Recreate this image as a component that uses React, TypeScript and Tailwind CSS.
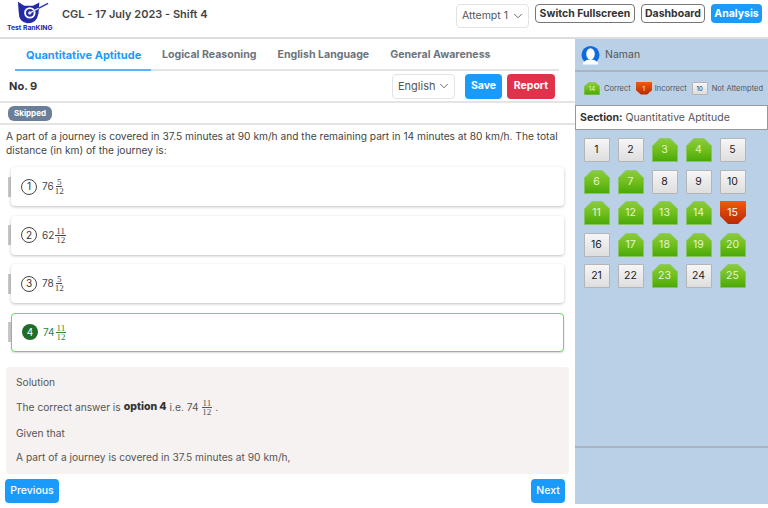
import { ChevronDown } from "lucide-react"

const font = { fontFamily: '"Inter", "Liberation Sans", sans-serif' }

const tabs = ["Quantitative Aptitude", "Logical Reasoning", "English Language", "General Awareness"]

// c = correct, i = incorrect, n = not attempted
const palette = "nnccn" + "ccnnn" + "ccccinccccnncnc"

function Frac({ top, bottom }: { top: string; bottom: string }) {
  return (
    <span className="inline-flex flex-col items-center align-middle font-['Liberation_Serif',serif] text-[9px] leading-[8px]">
      <span className="border-b border-current px-px">{top}</span>
      <span>{bottom}</span>
    </span>
  )
}

function Badge({ kind, label, size = "big" }: { kind: string; label: string; size?: "big" | "small" }) {
  const small = size === "small"
  const box = small ? "w-4 h-[13px] text-[6px]" : "w-[26px] h-[24px] text-[10.5px]"
  if (kind === "n") {
    return (
      <div className={`${box} flex items-center justify-center border border-[#b5b5b5] bg-gradient-to-b from-[#f6f6f6] to-[#dedede] text-[#222] rounded-[1px]`}>
        {label}
      </div>
    )
  }
  const correct = kind === "c"
  return (
    <div className={`${box} relative flex items-center justify-center ${correct ? "text-[#e4f5cf]" : "text-white"}`}>
      <svg viewBox="0 0 26 24" preserveAspectRatio="none" className="absolute inset-0 w-full h-full">
        <defs>
          <linearGradient id="gc" x1="0" y1="0" x2="0" y2="1">
            <stop offset="0" stopColor="#8ccb3e" />
            <stop offset="0.5" stopColor="#70bf1c" />
            <stop offset="1" stopColor="#48a808" />
          </linearGradient>
          <linearGradient id="gi" x1="0" y1="0" x2="0" y2="1">
            <stop offset="0" stopColor="#f25a10" />
            <stop offset="1" stopColor="#b82a02" />
          </linearGradient>
        </defs>
        {correct ? (
          <polygon points="0.4,8 8,0.4 18,0.4 25.6,8 25.6,23.6 0.4,23.6" fill="url(#gc)" stroke="#86c85a" strokeWidth="0.8" />
        ) : (
          <polygon points="0,0 26,0 26,15 18,23 8,23 0,15" fill="url(#gi)" />
        )}
      </svg>
      <span className="relative">{label}</span>
    </div>
  )
}

function Option({ n, whole, top, bottom, right }: { n: number; whole: string; top: string; bottom: string; right?: boolean }) {
  return (
    <div className="flex items-center pl-2 pr-[4px]">
      <div className="w-[3px] h-[20px] bg-[#c8c8c8]" />
      <div
        className={`flex-1 h-[39px] rounded-[4px] flex items-center pl-[10px] gap-[5px] bg-white ${
          right ? "border border-[#5fdc66] shadow-[0_1px_2px_rgba(0,0,0,0.15)] text-[#2a8a34]" : "shadow-[0_1px_3px_rgba(0,0,0,0.25)] text-[#444]"
        }`}
      >
        <div
          className={`w-[16px] h-[16px] rounded-full flex items-center justify-center text-[10px] ${
            right ? "bg-[#1f6e27] text-white" : "border border-[#444] text-[#333]"
          }`}
        >
          {n}
        </div>
        <span className="text-[10px] flex items-center gap-px">
          {whole}
          <Frac top={top} bottom={bottom} />
        </span>
      </div>
    </div>
  )
}

export default function App() {
  return (
    <div style={font} className="w-[768px] h-[508px] bg-white overflow-hidden text-[#444]">
      {/* Header */}
      <div className="h-[39px] border-b-2 border-[#ddd] flex items-start">
        <div className="w-[46px] h-[32px] ml-[7px] flex flex-col items-start">
          <svg viewBox="0 0 40 29" className="w-[32px] h-[23px] ml-[10px] mt-px">
            <path d="M1 1 L9 6 L20 6 L28 2 L27 15 Q25 28 13 28 Q2 27 2 14 Z" fill="#2329a8" />
            <circle cx="16" cy="15" r="6" fill="none" stroke="#fff" strokeWidth="2.4" />
            <circle cx="16" cy="15" r="2" fill="#fff" />
            <path d="M16 15 L39 3" stroke="#2b3bb0" strokeWidth="2" />
            <path d="M16 15 L27 9" stroke="#fff" strokeWidth="1.4" />
          </svg>
          <span className="text-[6.8px] font-bold text-[#2329a8] whitespace-nowrap leading-[7px]">Test RanKING</span>
        </div>
        <div className="ml-[9px] mt-[6px] text-[11px] font-semibold text-[#444]">CGL - 17 July 2023 - Shift 4</div>
        <div className="ml-auto flex items-start gap-[6px] mr-[6px] mt-[4px]">
          <div className="h-[24px] w-[73px] border border-[#e3e3e3] rounded-[4px] flex items-center justify-between pl-[5px] pr-[3px] text-[10.5px] text-[#555] whitespace-nowrap">
            Attempt 1 <ChevronDown size={14} strokeWidth={1.5} />
          </div>
          <button className="h-[19px] w-[100px] border border-[#777] rounded-[4px] text-[10.5px] font-bold text-[#333] whitespace-nowrap">Switch Fullscreen</button>
          <button className="h-[19px] w-[64px] border border-[#777] rounded-[4px] text-[10.5px] font-bold text-[#333]">Dashboard</button>
          <button className="h-[19px] w-[51px] bg-[#1a9bfc] rounded-[4px] text-[10.5px] font-bold text-white">Analysis</button>
        </div>
      </div>

      <div className="flex h-[465px]">
        {/* Left column */}
        <div className="w-[575px] flex flex-col">
          <div className="h-[32px] ml-[15px] mr-[16px] border-b-2 border-[#e4e4e4] flex text-[10.6px] font-bold text-[#6c757d]">
            <div className="px-[11px] pt-[8px] h-[32px] w-[136px] whitespace-nowrap border-b-2 border-[#5db2fb] text-[#1a9bfc] text-[11px]">{tabs[0]}</div>
            <div className="ml-[11px] pt-[8px]">{tabs[1]}</div>
            <div className="ml-[21px] pt-[8px]">{tabs[2]}</div>
            <div className="ml-[21px] pt-[8px]">{tabs[3]}</div>
          </div>

          <div className="h-[32px] border-b-2 border-[#e4e4e4] flex items-center pl-[9px] pr-[20px]">
            <span className="text-[11px] font-bold text-[#333]">No. 9</span>
            <div className="ml-auto flex items-center">
              <div className="h-[25px] w-[63px] border border-[#e3e3e3] rounded-[4px] flex items-center justify-between pl-[5px] pr-[3px] text-[11px] text-[#555]">
                English <ChevronDown size={14} strokeWidth={1.5} />
              </div>
              <button className="ml-[10px] w-[37px] h-[25px] bg-[#1a9bfc] rounded-[4px] text-[10.5px] font-bold text-white">Save</button>
              <button className="ml-[5px] w-[48px] h-[25px] bg-[#e0324a] rounded-[4px] text-[10.5px] font-bold text-white">Report</button>
            </div>
          </div>

          <div className="h-[22px] border-b-2 border-[#e4e4e4] pl-[8px] pt-[3px]">
            <span className="block w-[44px] h-[15px] leading-[15px] text-center rounded-[6px] bg-[#6c7f99] text-white text-[8px] font-bold">Skipped</span>
          </div>

          <p className="mt-[4px] mb-px mx-[6px] text-[10.2px] leading-[14px] text-[#444]">
            A part of a journey is covered in 37.5 minutes at 90 km/h and the remaining part in 14 minutes at 80 km/h. The total distance (in km) of the journey is:
          </p>

          <div className="mt-[9px] flex flex-col gap-[9.5px] pr-[7px]">
            <Option n={1} whole="76" top="5" bottom="12" />
            <Option n={2} whole="62" top="11" bottom="12" />
            <Option n={3} whole="78" top="5" bottom="12" />
            <Option n={4} whole="74" top="11" bottom="12" right />
          </div>

          <div className="mt-[15px] mx-[6px] h-[107px] bg-[#f5f2f1] rounded-[4px] pl-[10px] pt-[8px] text-[10.2px] text-[#555] flex flex-col gap-[10px] leading-[14px]">
            <div>Solution</div>
            <div className="flex items-center gap-[3px]">
              <span>The correct answer is</span> <b className="font-extrabold text-[10.5px] text-[#333]">option 4</b> <span>i.e. 74</span>
              <Frac top="11" bottom="12" />.
            </div>
            <div>Given that</div>
            <div>A part of a journey is covered in 37.5 minutes at 90 km/h,</div>
          </div>

          <div className="mt-[5px] flex justify-between pl-[5px] pr-[10px]">
            <button className="w-[54px] h-[24px] bg-[#1a9bfc] rounded-[4px] text-[10.5px] font-medium text-white">Previous</button>
            <button className="w-[34px] h-[24px] bg-[#1a9bfc] rounded-[4px] text-[10.5px] font-medium text-white">Next</button>
          </div>
        </div>

        {/* Right column */}
        <div className="w-[193px] h-[465px] bg-[#b9d0e7] flex flex-col">
          <div className="h-[33px] border-b-2 border-[#a9b4c0] flex items-center pl-[6px] gap-[5px]">
            <svg viewBox="0 0 20 20" className="w-[19px] h-[20px]">
              <circle cx="10" cy="10" r="9.5" fill="#0d6be0" />
              <ellipse cx="10" cy="9" rx="4.5" ry="6" fill="#fff" />
              <path d="M2 18 Q10 11 18 18 L18 20 L2 20 Z" fill="#fff" />
            </svg>
            <span className="text-[10.5px] text-[#555]">Naman</span>
          </div>
          <div className="h-[33px] flex items-center pl-[9px] text-[7.5px] text-[#555] whitespace-nowrap">
            <Badge kind="c" label="14" size="small" />
            <span className="ml-[4px]">Correct</span>
            <div className="ml-[5px]"><Badge kind="i" label="1" size="small" /></div>
            <span className="ml-[3px]">Incorrect</span>
            <div className="ml-[5px]"><Badge kind="n" label="10" size="small" /></div>
            <span className="ml-[4px]">Not Attempted</span>
          </div>
          <div className="h-[25px] bg-white border border-[#999] flex items-center pl-[4px] text-[10.5px] text-[#555]">
            <b className="font-bold text-[#333] mr-[3px]">Section:</b> Quantitative Aptitude
          </div>
          <div className="mt-[8px] pl-[8.5px] grid grid-cols-[repeat(5,26px)] gap-x-[8px] gap-y-[7.5px]">
            {palette.split("").map((k, i) => (
              <Badge key={i} kind={k} label={String(i + 1)} />
            ))}
          </div>
          <div className="mt-auto h-[58px] border-t-2 border-[#a9b4c0]" />
        </div>
      </div>
    </div>
  )
}
